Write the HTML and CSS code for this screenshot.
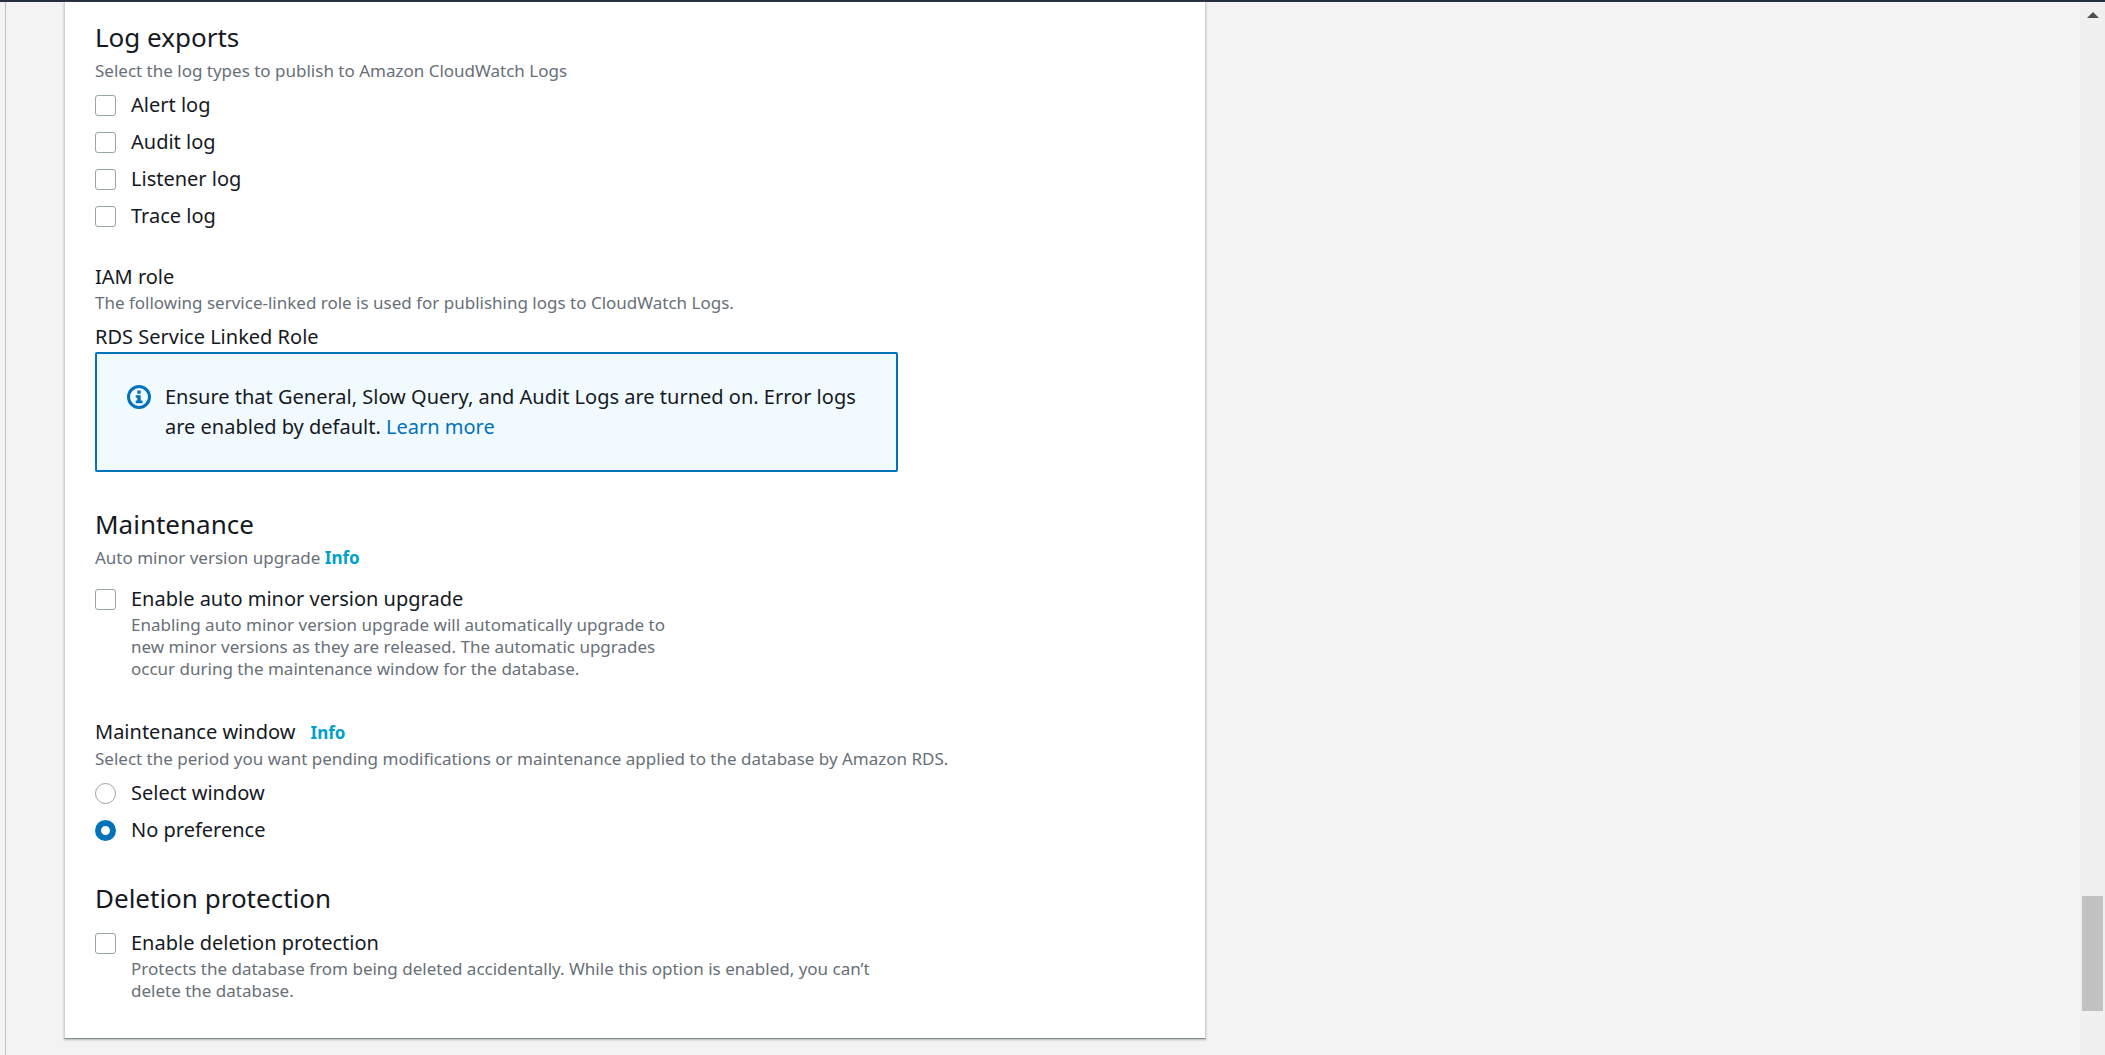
FILE: index.html
```html
<!DOCTYPE html>
<html lang="en">
<head>
    <meta charset="utf-8">
    <title>Create database</title>
    <meta name="viewport" content="width=device-width, initial-scale=1.0">
    <link rel="stylesheet" href="styles.css">
</head>
<body>
    <div class="page">
        <main class="content">
            <form class="card">
                <section>
                    <h2>Log exports</h2>
                    <p class="hint">Select the log types to publish to Amazon CloudWatch Logs</p>
                    <div class="choices">
                        <div class="choice">
                            <input type="checkbox" id="alertLog">
                            <label for="alertLog">Alert log</label>
                        </div>
                        <div class="choice">
                            <input type="checkbox" id="auditLog">
                            <label for="auditLog">Audit log</label>
                        </div>
                        <div class="choice">
                            <input type="checkbox" id="listenerLog">
                            <label for="listenerLog">Listener log</label>
                        </div>
                        <div class="choice">
                            <input type="checkbox" id="traceLog">
                            <label for="traceLog">Trace log</label>
                        </div>
                    </div>
                </section>

                <section class="role">
                    <h3>IAM role</h3>
                    <p class="hint">The following service-linked role is used for publishing logs to CloudWatch Logs.</p>
                    <p class="role-name">RDS Service Linked Role</p>
                    <div class="alert">
                        <svg class="alert-icon" viewBox="0 0 24 24" aria-hidden="true">
                            <circle cx="12" cy="12" r="10.5" fill="none" stroke="#0073bb" stroke-width="3"/>
                            <path fill="#0073bb" d="M10.300 5.500h3.400v3.200h-3.400zM8.700 10.200h5v5.300h1.800V18.200H8.700v-2.700h1.600v-2.700H8.700z"/>
                        </svg>
                        <p>Ensure that General, Slow Query, and Audit Logs are turned on. Error logs are enabled by default. <a href="#">Learn more</a></p>
                    </div>
                </section>

                <section class="maintenance">
                    <h2>Maintenance</h2>
                    <p class="hint">Auto minor version upgrade <a class="info" href="#">Info</a></p>
                    <div class="choice">
                        <input type="checkbox" id="autoUpgrade" aria-describedby="autoUpgradeHint">
                        <label for="autoUpgrade">Enable auto minor version upgrade</label>
                        <p class="hint narrow" id="autoUpgradeHint">Enabling auto minor version upgrade will automatically upgrade to new minor versions as they are released. The automatic upgrades occur during the maintenance window for the database.</p>
                    </div>
                </section>

                <section class="window">
                    <h3>Maintenance window <a class="info" href="#">Info</a></h3>
                    <p class="hint">Select the period you want pending modifications or maintenance applied to the database by Amazon RDS.</p>
                    <div class="choices">
                        <div class="choice">
                            <input type="radio" name="window" id="selectWindow">
                            <label for="selectWindow">Select window</label>
                        </div>
                        <div class="choice">
                            <input type="radio" name="window" id="noPreference" checked>
                            <label for="noPreference">No preference</label>
                        </div>
                    </div>
                </section>

                <section class="deletion">
                    <h2>Deletion protection</h2>
                    <div class="choice">
                        <input type="checkbox" id="deletionProtection" aria-describedby="deletionHint">
                        <label for="deletionProtection">Enable deletion protection</label>
                        <p class="hint wide" id="deletionHint">Protects the database from being deleted accidentally. While this option is enabled, you can’t delete the database.</p>
                    </div>
                </section>
            </form>
        </main>
        <div class="scrollbar" aria-hidden="true">
            <div class="scroll-up"></div>
            <div class="scroll-thumb"></div>
        </div>
    </div>
</body>
</html>
```

FILE: styles.css
```css
* {
    box-sizing: border-box;
}

body {
    margin: 0;
    background-color: #f3f3f3;
    color: #16191f;
    font-family: "Noto Sans", sans-serif;
    font-size: 20px;
    line-height: 30px;
}

h2, h3, p {
    margin: 0;
    font-weight: 400;
}

h2 {
    margin-bottom: 5px;
    font-size: 26px;
    line-height: 36px;
}

h3 {
    font-size: 20px;
    line-height: 30px;
}

a {
    color: #0073bb;
    text-decoration: none;
}

.page {
    display: flex;
    min-height: 100vh;
    border-top: 2px solid #232f3e;
}

.content {
    flex: 1;
    margin-left: 5px;
    padding: 0 58px 14px;
    border-left: 1px solid #bfc2c2;
}

.card {
    max-width: 1142px;
    padding: 17px 30px 36px;
    background-color: white;
    border: 1px solid #d0d3d3;
    border-top: none;
    border-bottom-color: #888c8c;
    box-shadow: 0 1px 2px #aab7b8;
}

.hint {
    color: #687078;
    font-size: 17px;
    line-height: 22px;
}

.info {
    color: #00a1c9;
    font-size: 17px;
    font-weight: 700;
}

.choices {
    display: grid;
    gap: 7px;
    margin-top: 8px;
}

.choice {
    display: grid;
    grid-template-columns: 21px 1fr;
    column-gap: 15px;
    align-items: center;
}

.choice label {
    justify-self: start;
}

.choice .hint {
    grid-column: 2;
}

.narrow {
    max-width: 560px;
}

.wide {
    max-width: 780px;
}

input {
    appearance: none;
    width: 21px;
    height: 21px;
    margin: 0;
    background-color: white;
    border: 1px solid #98a5a6;
}

input[type="checkbox"] {
    border-radius: 3px;
}

input[type="checkbox"]:checked {
    background-color: #0073bb;
}

input[type="radio"] {
    border-radius: 50%;
}

input[type="radio"]:checked {
    border: 6px solid #0073bb;
}

.role {
    margin-top: 31px;
}

.role-name {
    margin-top: 8px;
}

.alert {
    display: flex;
    gap: 14px;
    max-width: 803px;
    padding: 28px 30px;
    background-color: #f1faff;
    border: 2px solid #0073bb;
    border-radius: 2px;
}

.alert-icon {
    flex: none;
    width: 24px;
    height: 24px;
    margin-top: 3px;
}

.maintenance {
    margin-top: 34px;
}

.maintenance .choice {
    margin-top: 15px;
}

.window {
    margin-top: 37px;
}

.window .info {
    margin-left: 10px;
}

.deletion {
    margin-top: 35px;
}

.deletion .choice {
    margin-top: 12px;
}

.scrollbar {
    display: flex;
    flex-direction: column;
    align-items: center;
    width: 25px;
    background-color: #f0f0f1;
}

.scroll-up {
    margin-top: 10px;
    border: 6px solid transparent;
    border-top: none;
    border-bottom: 6px solid #505050;
}

.scroll-thumb {
    width: 21px;
    height: 115px;
    margin-top: auto;
    margin-bottom: 44px;
    background-color: #c1c1c1;
}
```
